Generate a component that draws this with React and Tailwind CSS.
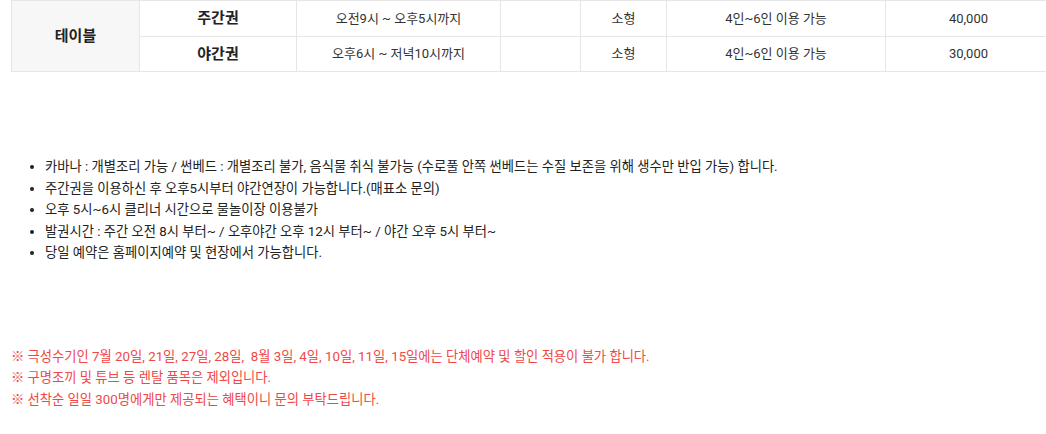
export default function App() {
  const rows = [
    { name: "주간권", time: "오전9시 ~ 오후5시까지", size: "소형", people: "4인~6인 이용 가능", price: "40,000" },
    { name: "야간권", time: "오후6시 ~ 저녁10시까지", size: "소형", people: "4인~6인 이용 가능", price: "30,000" },
  ];

  const notes = [
    "카바나 : 개별조리 가능 / 썬베드 : 개별조리 불가, 음식물 취식 불가능 (수로풀 안쪽 썬베드는 수질 보존을 위해 생수만 반입 가능) 합니다.",
    "주간권을 이용하신 후 오후5시부터 야간연장이 가능합니다.(매표소 문의)",
    "오후 5시~6시 클리너 시간으로 물놀이장 이용불가",
    "발권시간 : 주간 오전 8시 부터~ / 오후야간 오후 12시 부터~ / 야간 오후 5시 부터~",
    "당일 예약은 홈페이지예약 및 현장에서 가능합니다.",
  ];

  const warnings = [
    "※ 극성수기인 7월 20일, 21일, 27일, 28일,  8월 3일, 4일, 10일, 11일, 15일에는 단체예약 및 할인 적용이 불가 합니다.",
    "※ 구명조끼 및 튜브 등 렌탈 품목은 제외입니다.",
    "※ 선착순 일일 300명에게만 제공되는 혜택이니 문의 부탁드립니다.",
  ];

  return (
    <div
      className="w-[1046px] h-[434px] overflow-hidden bg-white text-[#333] text-[13px]"
      style={{ fontFamily: 'Roboto, "Noto Sans CJK KR", sans-serif' }}
    >
      {/* table */}
      <div className="pl-[11px]">
        <table className="w-[1041px] border-collapse table-fixed">
          <colgroup>
            <col className="w-[128px]" />
            <col className="w-[157px]" />
            <col className="w-[204px]" />
            <col className="w-[80px]" />
            <col className="w-[86px]" />
            <col className="w-[219px]" />
            <col />
          </colgroup>
          <tbody>
            {rows.map((r, i) => (
              <tr key={r.name} className={i === 0 ? "h-[36px]" : "h-[35px]"}>
                {i === 0 && (
                  <td
                    rowSpan={2}
                    className="border border-[#e6e6e6] bg-[#f7f7f7] text-center font-bold text-[15px] text-[#222]"
                  >
                    테이블
                  </td>
                )}
                <td className="border border-[#e6e6e6] text-center font-bold text-[15px] text-[#222]">{r.name}</td>
                <td className="border border-[#e6e6e6] text-center">{r.time}</td>
                <td className="border border-[#e6e6e6]"></td>
                <td className="border border-[#e6e6e6] text-center">{r.size}</td>
                <td className="border border-[#e6e6e6] text-center">{r.people}</td>
                <td className="border border-[#e6e6e6] text-center">{r.price}</td>
              </tr>
            ))}
          </tbody>
        </table>
      </div>

      {/* notes */}
      <ul className="mt-[84px] pl-[45px] list-disc text-[#222] text-[13.3px] leading-[21.5px]">
        {notes.map((n) => (
          <li key={n}>{n}</li>
        ))}
      </ul>

      {/* warnings */}
      <div className="mt-[82px] pl-[11px] text-[#f04848] text-[13.3px] leading-[21.5px]">
        {warnings.map((w) => (
          <p key={w} className="whitespace-pre">{w}</p>
        ))}
      </div>
    </div>
  );
}
